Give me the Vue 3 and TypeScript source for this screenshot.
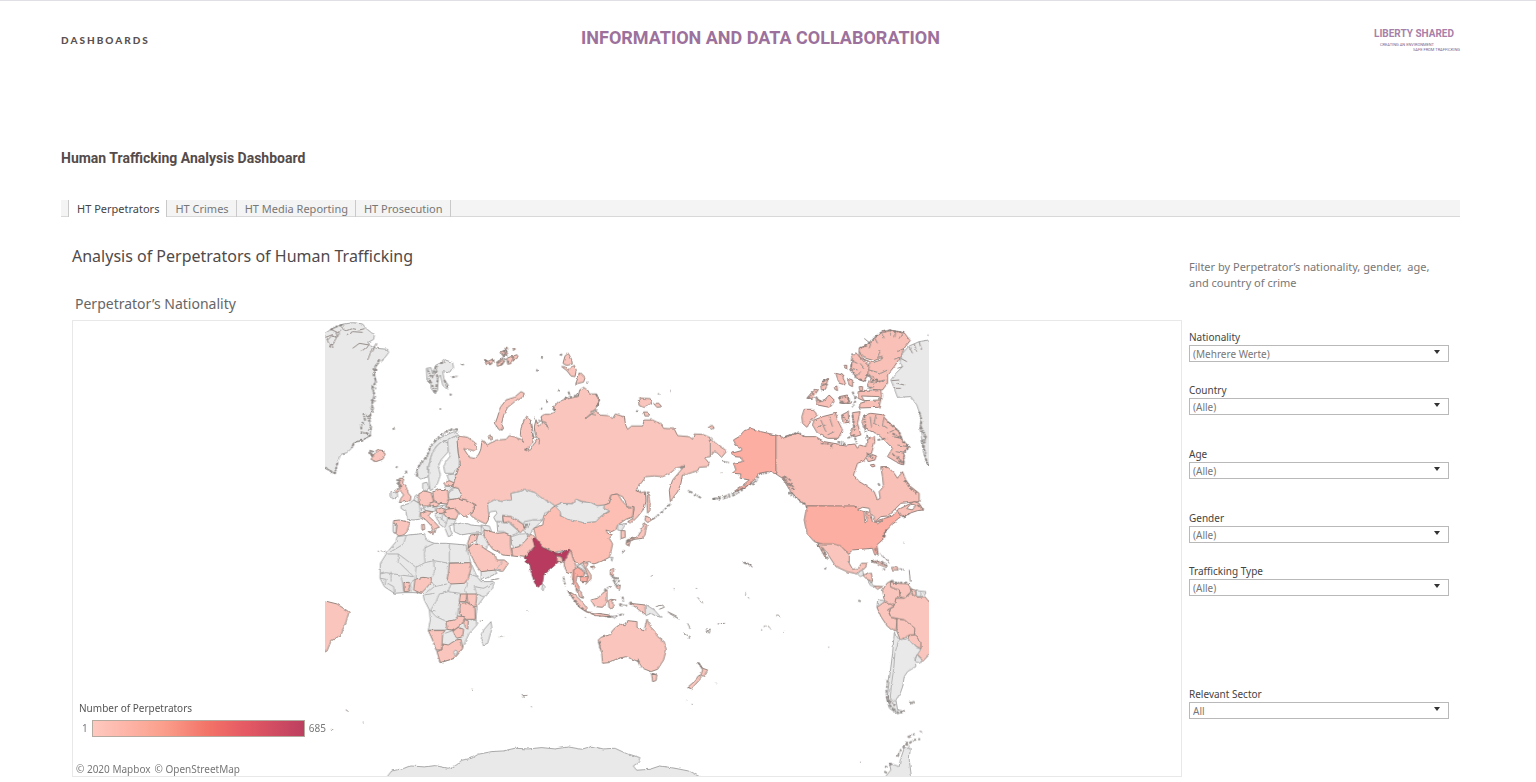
<script setup lang="ts">
import { ref } from 'vue'

type Tone = 'none' | 'low' | 'mid' | 'canada' | 'high' | 'top' | 'water' | 'border' | 'edge' | 'rough'
interface Region { name: string; x: number; y: number; shapes: [Tone, string][] }
interface Filter { id: string; label: string; options: string[]; value: string; space: string }

const tabs = ['HT Perpetrators', 'HT Crimes', 'HT Media Reporting', 'HT Prosecution']
const activeTab = ref(tabs[0])

const filters = ref<Filter[]>([
  { id: 'nationality', label: 'Nationality', options: ['(Mehrere Werte)', '(Alle)'], value: '(Mehrere Werte)', space: 'first' },
  { id: 'country', label: 'Country', options: ['(Alle)'], value: '(Alle)', space: 'near' },
  { id: 'age', label: 'Age', options: ['(Alle)'], value: '(Alle)', space: 'wide' },
  { id: 'gender', label: 'Gender', options: ['(Alle)'], value: '(Alle)', space: 'wide' },
  { id: 'type', label: 'Trafficking Type', options: ['(Alle)'], value: '(Alle)', space: 'near' },
  { id: 'sector', label: 'Relevant Sector', options: ['All'], value: 'All', space: 'apart' },
])

const regions: Region[] = [
  {
    name: 'north-atlantic', x: -12, y: -3, shapes: [
      ['none', 'M0 50L12 40 30 28 60 14 95 8 125 12 135 25 160 45 158 58 140 68 150 75 165 85 200 88 203 98 190 115 178 125 165 140 160 160 165 180 155 200 160 220 152 250 158 265 145 290 152 320 148 345 125 362 100 366 92 385 78 398 60 403 50 425 42 460 25 450 12 445 0 450Z'],
      ['edge', 'M20 60l15-15 12 10M35 75l10-20M14 52l20-8 14 8 8-14M30 28l20 10 10-8M45 35l5 15M60 20l15 12 20-6 20 4 16-4M75 45l20-10 30 2M95 85l20-15 30 5M120 95l25-20M140 120l12-30 10-8M155 95l10-25M15 50l14 34M22 80l10-8 4 12'],
      ['rough', 'M175 118L162 142 158 165 166 185 154 205 162 230 152 255 156 275 142 295 150 320 140 340 122 338 120 315 132 300 128 282 142 290M160 150l10 0M152 200l14 6M150 240l14 4M150 345L125 362 100 366 92 385M12 442L25 452 42 460 50 425M28 30L45 20 70 13'],
      ['none', 'M316 145L330 143 335 160 345 135 358 130 368 118 395 128 398 145 380 158 365 155 370 180 382 195 378 208 365 195 358 165 352 175 350 210 343 222 330 205 330 190 318 180Z'],
      ['rough', 'M320 148L332 175 345 140 350 180 342 220 332 190 320 175M358 130L375 125M370 180l10 22M420 132l10 2M393 172l18-4M356 267l4 0M386 223l6 2M215 328l6-3M225 440l4 3M255 452l2 12M250 468l-3 5'],
      ['low', 'M490 118l12 6 14-8 4 8-10 10-14 0zM528 125l15-8 8 8-8 10-14 4zM540 95l14-4 6 10-12 10zM558 115l14-6 8 10-10 12-10 2zM572 110l16-6 4 8-16 10zM552 84l6-3 2 8-6 0zM575 86l8 0-2 6z'],
      ['rough', 'M492 120L505 132 518 118M530 130L545 115 558 92 550 108 540 100M540 135L552 118 566 128M548 90L558 110'],
      ['low', 'M148 402L158 405 165 395 175 390 188 392 193 405 185 418 165 425 150 418 154 412Z'],
      ['rough', 'M142 400L155 395 148 405 158 408M145 392l8 2'],
      ['none', 'M288 448L300 430 318 410 330 380 350 358 375 345 400 335 415 345 405 350 385 360 365 363 345 380 330 410 322 440 322 470 300 478 290 470Z'],
      ['none', 'M365 363L380 368 382 395 360 420 352 440 358 465 350 490 340 505 328 512 322 470 325 430 335 395 350 375Z'],
      ['none', 'M380 360L405 347 412 360 410 380 415 420 415 440 400 460 372 460 368 440 375 425 388 408 382 395Z'],
      ['rough', 'M288 470L286 448 302 428 318 408 328 380 348 356 368 340 395 328 415 336M372 335L398 326 412 330'],
      ['none', 'M305 490L318 487 325 505 312 512 305 505ZM378 465L402 462 405 478 400 490 385 485ZM370 498L403 500 388 515 372 508ZM385 515L395 502 415 505 425 522 418 538 385 538 382 528Z'],
      ['low', 'M368 490L385 482 402 490 403 498 375 498Z'],
      ['low', 'M235 475L248 475 245 490 255 500 262 520 270 530 268 542 235 548 240 535 248 525 240 515 235 500Z'],
      ['none', 'M210 515L228 512 230 530 215 537 210 528Z'],
      ['low', 'M222 512L230 506 234 514 226 518Z'],
      ['rough', 'M226 480L238 482 230 495 240 500 232 508M228 488l8 10'],
    ],
  },
  {
    name: 'eurasia', x: 468, y: -3, shapes: [
      ['low', 'M-65 348L-40 352-18 368-10 385-18 393-40 388-52 386-40 404-35 412-20 415-8 405-2 392 0 385 3 362 12 365 18 375 30 368 50 360 75 358 85 347 100 350 118 358 128 367 118 345 120 325 130 300 138 288 148 300 152 325 158 350 155 370 143 385 132 388 148 390 160 372 170 355 163 345 160 320 165 300 172 318 185 310 180 290 190 283 205 283 222 275 218 262 232 245 250 238 275 233 292 228 296 210 308 202 322 212 325 222 345 222 355 238 350 260 335 275 315 295 345 272 355 285 380 287 395 295 403 282 430 290 434 315 440 328 452 318 485 318 490 300 515 300 540 312 548 325 580 327 590 347 625 350 635 358 640 342 665 343 688 353 705 370 718 380 738 393 722 412 708 398 700 395 688 410 670 412 685 430 680 440 655 442 650 452 620 462 605 462 600 490 590 515 575 535 568 545 565 510 575 480 590 462 612 437 585 445 565 462 545 470 520 468 495 470 480 490 465 510 480 518 493 515 495 540 490 565 470 590 450 610 440 605 455 595 460 565 440 560 425 530 405 522 388 530 380 555 345 558 320 550 290 540 270 552 235 552 222 558 205 545 190 540 170 525 162 518 130 508 115 515 90 520 92 540 60 545 40 540 20 550 25 575 22 600 15 612 0 605-20 595-32 585-22 570-15 555-45 540-68 535-58 525-68 505-85 500-78 480-72 460-62 430-68 400-72 360Z'],
      ['edge', 'M688 353V410'],
      ['edge', 'M150 300L156 330 154 350 166 352 176 360 174 376M160 290L170 310 182 300 196 308 202 328M172 300L190 308 200 322M315 295L330 282 345 285M328 275L350 268'],
      ['rough', 'M45 318L65 330M215 265L222 272M262 215L270 232M195 240l5 8M180 265l4 2M230 210l4 2M465 510L482 516M130 388l14 4M316 187l6 2M236 103l8 2M180 112l6 2M165 150l6 2M530 222l5 2M568 213l2 0M465 273l4 2M598 445l12-8'],
      ['rough', 'M250 237L280 228 294 226M345 222L355 240 348 262'],
      ['low', 'M42 312L50 290 58 262 75 240 100 232 120 215 130 220 126 232 100 246 80 262 68 285 62 310 68 326 55 330Z'],
      ['low', 'M252 108L262 100 272 118 274 132 258 136 246 130ZM242 140L255 140 262 150 280 136 286 150 282 170 270 168 258 152ZM296 158L312 174 308 186 284 192 290 176ZM472 240L480 234 508 236 512 252 490 262 474 256ZM518 250L534 250 542 260 528 262ZM488 276L502 276 506 288 492 288ZM682 322L694 316 700 324 688 328ZM22 352L32 348 35 356 26 360Z'],
      ['none', 'M20 550L40 540 60 545 92 540 90 520 115 515 130 508 162 518 170 525 190 540 205 545 222 558 212 572 190 580 185 600 155 600 130 615 110 600 90 590 65 585 65 605 45 605 38 592 48 580 45 573 30 575 22 580Z'],
      ['none', 'M48 605L65 608 85 610 115 635 90 650 70 635 50 635ZM90 650L115 642 140 640 145 655 130 670 105 685 92 675ZM130 605L155 600 185 600 160 625 145 645 125 630Z'],
      ['low', 'M65 588L90 590 125 612 132 625 118 638 85 605 68 608Z'],
      ['rough', 'M132 615L150 612M128 622L145 620'],
    ],
  },
  {
    name: 'europe-africa', x: 138, y: 297, shapes: [
      ['none', 'M90 258L115 250 128 240 145 250 148 275 145 298 128 300 108 298 105 275 90 265ZM128 240L135 228 145 225 145 250ZM66 310L78 314 75 340 66 335Z'],
      ['low', 'M68 302L85 300 118 308 112 322 108 335 98 345 82 348 75 340 78 315 68 310Z'],
      ['none', 'M155 262L180 260 195 265 190 275 165 273ZM195 260L228 254 222 264 200 268ZM145 275L155 262 165 273 150 280ZM190 280L218 282 230 296 255 298 250 312 235 318 245 345 232 350 222 325 205 312Z'],
      ['border', 'M200 290L215 300 228 310M215 284L212 300M230 296L222 322'],
      ['low', 'M143 222L160 213 180 218 185 235 188 245 175 250 178 258 155 258 148 255 143 245Z'],
      ['low', 'M185 215L205 208 230 210 232 235 228 252 205 250 188 240Z'],
      ['low', 'M175 250L190 245 206 252 195 260 178 258ZM195 270L215 262 225 268 215 280 198 280Z'],
      ['low', 'M232 240L262 235 285 240 315 255 308 270 298 280 285 285 290 292 278 290 265 280 255 268 230 265 228 255Z'],
      ['low', 'M225 268L250 265 262 280 255 298 230 295 218 282Z'],
      ['low', 'M148 280L165 272 182 275 172 288 190 305 205 322 195 325 192 338 183 320 165 300 150 292ZM172 335L188 336 186 344ZM152 315L160 313 161 328 153 331Z'],
      ['none', 'M248 315L275 308 300 315 330 318 333 338 300 340 270 345 250 335ZM320 342L338 345 352 372 345 390 315 370ZM330 315L355 318 362 335 340 330ZM330 455L370 448 378 460 345 475 330 480Z'],
      ['low', 'M298 345L322 342 315 360 300 370 292 385 290 370Z'],
      ['low', 'M338 330L360 335 380 340 400 338 418 345 418 380 425 408 395 405 380 395 365 388 352 370 340 350Z'],
      ['low', 'M292 385L305 372 325 375 350 392 372 405 378 420 400 420 412 430 395 455 375 450 330 455 318 440 305 415 295 395Z'],
      ['border', 'M395 455L375 450 392 432 392 420'],
      ['low', 'M425 408L422 385 445 380 465 360 480 342 492 355 492 378 470 400 462 412Z'],
      ['none', 'M78 350L115 345 160 340 168 362 190 370 225 370 285 375 290 395 300 430 318 470 330 485 370 485 365 505 340 530 318 560 315 600 318 615 295 640 285 660 272 690 250 715 208 728 200 700 185 660 172 630 178 600 175 570 160 540 155 520 128 518 100 518 70 520 40 500 27 475 28 430 50 395 75 365Z'],
      ['border', 'M105 348L98 372 60 395M50 402L82 402 82 425 128 470 88 465 45 458 28 462M82 402L135 442 162 428 160 400 164 375M135 442L132 478M162 428L188 422 190 455 182 475M188 422L235 430 235 373M235 428L292 428M190 370L160 385M182 485L190 500 228 492M190 500L165 520M190 520L160 525M240 492L232 515 205 522 195 545 178 572 195 590 222 602M232 515L268 520M265 550L258 590M178 572H192M172 630L222 630 228 628M282 478L290 492 283 512 288 522M318 470L290 460M340 530L318 522 310 500 338 505 365 490M120 515L118 488 132 478M98 515L95 490 88 465M70 520L68 500 50 490M222 640L245 632M300 600L318 602M28 475L45 478 42 495M60 455L60 485'],
      ['low', 'M235 430L298 428 300 445 292 475 280 490 240 492 228 478 232 460ZM132 478L155 472 180 475 182 485 165 505 150 520 128 510ZM98 488L115 487 116 513 100 516Z'],
      ['low', 'M288 522L318 522 315 550 312 562 290 548ZM268 522L288 522 285 545 265 545ZM265 550L290 548 312 565 313 598 285 598 268 585ZM280 598L292 603 290 628 282 620ZM225 605L250 600 258 588 278 590 278 610 262 620 250 632 228 628ZM245 632L262 622 278 628 275 650 258 655ZM172 632L222 632 215 640 212 690 195 690 185 660ZM212 690L215 672 232 675 255 660 270 658 275 685 250 715 208 728 198 695Z'],
      ['none', 'M247 697L253 690 260 695 256 703 250 703ZM360 605L363 625 350 670 338 675 330 660 338 630Z'],
      ['low', 'M515 378L535 385 558 392 558 402 530 395Z'],
      ['top', 'M485 355L505 352 508 370 518 385 555 402 560 415 558 430 535 450 518 465 515 485 502 502 492 490 480 455 478 435 462 425 470 418 460 415 475 400 492 380Z'],
      ['none', 'M515 492L522 500 520 512 512 508Z'],
      ['edge', 'M20 393l4 2M30 392l4 3M38 396l5-3M327 603l8 2M390 648l4 2M400 650l2-2M360 480l24-4'],
    ],
  },
  {
    name: 'east-asia-oceania', x: 528, y: 447, shapes: [
      ['mid', 'M162 108L180 125 178 138 250 158 285 155 300 138 325 125 308 115 310 105 325 100 330 75 350 72 365 95 385 115 398 112 395 140 375 148 350 165 345 178 332 185 315 180 320 190 335 195 325 205 335 222 330 245 325 262 300 275 278 282 265 275 245 278 232 285 218 270 208 240 190 243 160 247 128 232 105 205 98 175 125 165 130 140 152 115Z'],
      ['none', 'M162 108L180 100 215 102 225 87 240 95 270 98 290 108 310 105 308 115 325 122 300 138 285 155 250 158 200 148 180 138 178 125Z'],
      ['none', 'M350 165L375 160 362 182 350 180ZM328 262L336 262 333 274ZM168 244L185 244 184 250 172 250Z'],
      ['low', 'M360 182L372 182 373 202 360 206ZM435 138L455 148 440 158 432 150ZM430 160L438 165 432 195 425 205 400 208 385 215 378 205 395 205 410 200 420 185ZM378 212L388 215 383 230 375 222ZM440 65L445 85 448 120 440 130 438 100ZM268 290L280 288 276 298Z'],
      ['rough', 'M455 148L485 125 510 100M378 210L384 228M380 212L400 206M370 240L365 250M600 84L560 60M635 87L670 85 700 75 725 60'],
      ['top', 'M158 247L170 252 190 245 205 238 211 245 195 268 188 275 182 262 168 260Z'],
      ['low', 'M168 258L182 262 185 278 170 278Z'],
      ['low', 'M190 275L208 240 218 270 225 290 218 300 218 320 215 345 210 310 200 310 190 290Z'],
      ['high', 'M218 300L230 292 250 305 248 318 235 320 228 318 225 335 235 352 228 358 218 340Z'],
      ['none', 'M228 288L240 282 262 310 262 320 248 300Z'],
      ['low', 'M245 278L262 280 255 292 270 315 270 330 255 345 262 320 250 290Z'],
      ['high', 'M238 320L262 320 258 335 242 335Z'],
      ['low', 'M225 355L240 365 245 385 235 380ZM200 362L222 375 240 392 258 415 255 425 235 412 215 385ZM255 425L290 430 325 435 325 440 285 437ZM270 390L290 385 305 370 318 360 318 395 305 412 282 410ZM328 298L338 295 337 318 328 315ZM345 350L358 345 355 362ZM322 392L330 388 345 390 330 396 340 405 332 418 324 412Z'],
      ['rough', 'M188 320L190 335 194 350M204 366L235 408 255 424M330 320L350 325 340 335 352 345M338 322L354 332 346 348M335 325L345 345M310 362L330 345M365 380L368 398M355 402L380 408M325 440L350 438 370 430M385 400L410 410M388 395L395 408M318 440L340 442'],
      ['low', 'M385 400L405 402 432 405 433 435 420 425 405 412Z'],
      ['none', 'M433 403L460 420 480 442 462 437 450 430 433 438Z'],
      ['edge', 'M465 410L485 405 490 412 475 418M500 425L530 440M505 430L535 448M560 460L568 475M548 490L568 500 558 506M590 382L605 400M450 320L455 315M615 485L628 480 625 490 615 478M650 462L672 460M725 278L740 280 755 292M660 8l4 0M518 355l3 2M740 380l3 2M585 355l4 2M645 638l2 2M572 702l3 2M557 690l2 0M66 678l10-2M90 710l3 1M-5 500l4 0M78 422l3 2M252 442l3 1'],
      ['low', 'M292 510L300 502 325 495 338 478 358 462 372 468 380 452 408 455 408 472 430 480 438 448 448 470 460 482 470 500 490 515 496 540 488 570 470 598 450 605 425 595 412 575 400 570 375 560 345 568 325 578 305 580 302 550ZM452 612L468 615 465 632 455 635ZM592 578L605 595 620 600 608 620 600 615 605 600ZM598 615L600 625 582 645 572 660 560 652 580 635 592 618Z'],
      ['rough', 'M294 515L298 535M410 570L416 580M592 578L604 594M562 652L570 660M452 612l16 0'],
    ],
  },
  {
    name: 'north-america', x: 1128, y: -3, shapes: [
      ['canada', 'M225 345L245 352 290 340 310 350 345 350 370 365 410 372 440 375 462 372 470 385 480 375 495 380 500 355 520 348 522 365 512 400 500 405 490 422 470 430 458 465 475 485 500 500 520 515 530 540 538 535 535 515 548 500 545 470 540 440 560 440 580 460 590 475 605 455 615 480 630 500 655 520 655 545 620 548 600 550 580 570 560 588 540 590 520 608 500 590 490 575 465 560 318 558 295 540 270 515 245 475 225 462Z'],
      ['high', 'M225 345L180 335 150 325 130 332 115 350 98 360 105 375 122 385 122 392 92 400 100 410 122 412 125 425 98 430 105 450 95 460 120 462 118 475 145 480 120 500 95 518 130 505 160 480 175 460 200 455 225 462Z'],
      ['high', 'M318 558L460 558 490 572 498 580 508 590 520 610 535 600 575 588 590 570 600 590 575 610 555 630 550 655 528 675 532 705 522 705 515 685 480 688 455 690 445 700 430 690 415 680 395 682 370 675 340 665 318 640 310 600Z'],
      ['canada', 'M590 570L610 560 640 545 655 550 668 570 650 572 632 578 605 590Z'],
      ['water', 'M470 570L485 562 505 565 508 578 495 574 498 605 492 605 490 575ZM510 580L520 590 522 608 545 602 530 612 515 606ZM618 566L630 552 645 556 635 570Z'],
      ['rough', 'M35 537L60 533 95 520 125 505 155 485M160 490L178 462 205 458M245 470L258 490 275 500 272 520 292 540 305 548 318 565M250 468L270 485 280 510M265 515L272 530M252 475L265 505M155 492L170 480M65 425L85 428M555 628L550 655M605 590L625 582M650 555L668 568M612 480L628 505 652 522'],
      ['canada', 'M475 85L500 75 520 55 540 38 565 30 610 38 628 62 610 85 600 110 580 140 560 165 560 190 545 210 510 208 500 195 510 170 498 160 505 130 475 110Z'],
      ['canada', 'M455 110L465 98 480 115 505 140 500 165 490 185 465 175 450 145ZM472 215L540 212 542 228 535 262 475 264 478 250 495 245 472 235ZM310 268L335 268 350 285 330 305 318 322 305 310 303 290ZM340 300L365 290 405 280 410 300 425 330 412 355 380 355 350 340 335 315ZM422 285L442 275 445 310 428 312ZM455 278L478 275 470 310 480 345 462 350 448 345 458 320ZM345 235L365 245 385 225 400 240 385 262 350 255ZM318 235L340 208 352 210 335 235ZM415 230L440 225 450 250 420 250ZM405 160L425 165 435 195 415 190ZM440 175L455 180 455 200 445 195ZM365 185L382 175 378 190 365 194ZM360 198L380 192 374 208 362 210ZM400 200l8-2 2 14-8-4zM430 136l8 0 0 10-6-2zM475 200l10 0 0 12-8 0z'],
      ['canada', 'M490 285L510 280 550 285 560 305 595 335 605 365 625 380 610 400 608 435 585 425 560 410 575 385 545 355 525 340 490 325 483 305ZM497 415L512 403 527 408 522 420 502 425ZM508 435l12-2 2 6-8 2z'],
      ['water', 'M475 95L490 118 515 128 540 120 545 112 520 122 495 115ZM482 228L535 230 538 240 490 242Z'],
      ['edge', 'M490 55L510 72 505 85M520 50L530 70M545 35L550 55M565 30L568 45M585 34L582 52M605 38L595 56M610 85L590 95M600 110L580 118M540 90L530 112 545 108M478 130L490 145M455 125L470 130M452 145L470 150M465 170L480 155M490 180L505 160 520 175 510 185 530 180M505 150L540 160 560 150M520 190L550 180M500 205L520 200M508 290L512 320M525 285L520 310 535 320M550 290L545 315 560 325M580 330L560 340M600 355L575 350M620 380L590 375M610 400L585 395M608 430L590 408M350 320L375 315M360 300L375 335M385 290L395 320M400 335L380 345'],
      ['rough', 'M475 85L495 78 515 58 540 38 568 31 608 38M455 100L450 145 465 175 490 182M500 165L515 180 540 185M412 235L440 230 445 248 418 248 432 240M455 215L465 240 455 262M345 230L355 245 370 240M320 235L345 215M365 185L380 178M425 285L440 305M455 285L462 330M560 305L595 335 605 365 625 380 610 400 608 435M575 340L600 355M250 352L290 338 310 348M360 370L390 372 392 385M410 365L435 372M440 355L460 345 468 372M490 285L495 340 500 370M498 400L522 420M575 400L605 430M532 490L538 500M530 360L560 355'],
      ['none', 'M700 60L684 60 655 65 625 78 605 100 598 125 605 140 585 160 570 180 580 205 590 232 630 230 648 255 660 290 658 330 665 370 668 400 684 440 700 450Z'],
      ['edge', 'M655 65L662 90M640 72L648 95M625 80L635 100M600 115L618 125M605 140L590 145M572 182L595 180M578 205L600 205M590 190L610 195M680 45l3 2'],
      ['rough', 'M655 275L662 300 658 330 672 345 665 375 674 400 672 410 684 440M660 320L675 350 668 385'],
    ],
  },
  {
    name: 'latin-america', x: 1248, y: 627, shapes: [
      ['low', 'M230 40L248 42 275 42 300 48 325 75 325 100 335 118 352 115 362 100 378 100 372 115 355 125 350 132 318 125 285 110 262 75 242 48 262 90 250 78Z'],
      ['none', 'M350 132L358 124 365 120 368 135 358 140ZM378 148L395 160 400 170 388 166Z'],
      ['low', 'M365 135L392 130 395 155 378 148ZM398 168L425 170 410 178ZM390 95L410 93 440 108 430 110 400 98ZM452 112L467 112 472 120 454 120Z'],
      ['low', 'M425 180L438 160 452 152 448 170 475 180 478 200 465 205 460 228 430 212Z'],
      ['low', 'M448 155L470 160 505 162 510 185 490 205 478 200 475 180 450 172ZM510 175L525 185 525 205 515 195Z'],
      ['none', 'M525 182L555 185 550 200 528 200ZM410 210L432 212 420 235 408 232Z'],
      ['low', 'M408 232L432 215 460 228 440 240 450 262 468 268 465 305 440 290 420 260Z'],
      ['low', 'M465 205L490 205 510 190 528 202 552 200 564 215 580 220 580 365 564 375 548 392 528 372 540 355 538 335 522 315 520 295 490 270 468 265 450 262 442 240 460 230Z'],
      ['low', 'M468 268L490 270 522 295 520 315 500 318 478 330 468 305ZM505 315L522 315 540 338 540 355 525 350 500 328Z'],
      ['none', 'M460 308L475 330 500 325 525 352 540 358 522 385 525 410 500 425 490 440 485 470 478 490 465 510 470 540 490 545 470 552 445 535 438 510 445 450 455 370ZM528 374L545 392 540 400 522 395Z'],
      ['border', 'M472 335L462 370 458 420 452 460 448 505 465 515M540 183V200'],
      ['rough', 'M440 450L436 490 442 520 458 540 475 550 492 543M445 510L465 530M445 525L468 545M436 500L450 525M505 515L522 516M508 520L522 518M450 155L458 152M460 158L500 158M390 95L412 94 438 106M425 118l8 0M475 118l14 1M232 42L262 88M10 98L22 102 34 112M352 212l8 2M250 115l6 1M432 0L430 20M402 55L412 78'],
      ['edge', 'M418 70L428 80 440 90M430 80L445 100M505 120L508 155M60 300l4 0M68 290l6-2M82 288l4 6M88 296l4 0M105 256l12 4M126 306l3 0M12 192l4 0M22 203l3 2M262 352l3 0M357 697l3 1M536 604l8 2M487 38l4 1'],
      ['none', 'M430 745L450 720 445 700 460 705 475 710 478 690 490 655 508 655 505 690 512 745Z'],
      ['rough', 'M470 680L480 660 495 645 500 635M505 640L520 630 538 628M500 622L522 612M430 725L440 730M432 710l8 2M445 705l10-4M495 640L505 650'],
    ],
  },
  {
    name: 'southern-edge', x: 0, y: 0, shapes: [
      ['low', 'M-20 835L0 840 36 849 72 873 63 903 48 942 18 960 6 990 0 993-20 1000Z'],
      ['none', 'M180 1375L200 1350 235 1343 255 1335 300 1338 330 1334 370 1342 395 1332 410 1318 440 1312 460 1300 500 1292 535 1290 570 1282 610 1284 650 1280 690 1284 730 1278 770 1285 800 1276 835 1284 870 1282 900 1296 945 1310 940 1325 925 1335 935 1348 975 1345 1005 1335 1050 1342 1090 1350 1140 1375Z'],
      ['edge', 'M62 1166l8 6M18 1225l6 1M115 1202l2 6M590 1120l8 6M595 1128l4 2M440 1105l4 0'],
    ],
  },
]
</script>

<template>
  <div class="page">
    <header class="site-header">
      <nav><a class="nav-link" href="#dashboards">Dashboards</a></nav>
      <h1>Information and Data Collaboration</h1>
      <a class="logo" href="#home">
        <span class="logo-name">LIBERTY SHARED</span>
        <span class="logo-line first-line">CREATING AN ENVIRONMENT</span>
        <span class="logo-line">SAFE FROM TRAFFICKING</span>
      </a>
    </header>

    <main>
      <h2>Human Trafficking Analysis Dashboard</h2>

      <div class="tabs" role="tablist">
        <button
          v-for="tab in tabs"
          :key="tab"
          type="button"
          role="tab"
          class="tab"
          :class="{ active: tab === activeTab }"
          :aria-selected="tab === activeTab"
          @click="activeTab = tab"
        >{{ tab }}</button>
      </div>

      <div class="dashboard">
        <section class="analysis">
          <h3>Analysis of Perpetrators of Human Trafficking</h3>
          <h4>Perpetrator’s Nationality</h4>
          <div class="map-frame">
            <svg class="map" viewBox="0 0 1812 1365" role="img" aria-label="Perpetrators by nationality">
              <defs>
                <filter id="coast" x="0" y="0" width="1812" height="1365" filterUnits="userSpaceOnUse">
                  <feTurbulence type="fractalNoise" baseFrequency="0.06" numOctaves="3" seed="4" result="n" />
                  <feDisplacementMap in="SourceGraphic" in2="n" scale="8" xChannelSelector="R" yChannelSelector="G" />
                </filter>
              </defs>
              <g filter="url(#coast)">
                <g v-for="region in regions" :key="region.name" :transform="`translate(${region.x} ${region.y})`">
                  <path v-for="(shape, i) in region.shapes" :key="i" :class="shape[0]" :d="shape[1]" />
                </g>
              </g>
            </svg>
            <div class="legend">
              <p class="legend-title">Number of Perpetrators</p>
              <div class="scale">
                <span class="scale-min">1</span>
                <span class="ramp"></span>
                <span>685</span>
              </div>
              <p class="credits"><a href="#mapbox">© 2020 Mapbox</a><a href="#osm">© OpenStreetMap</a></p>
            </div>
          </div>
        </section>

        <aside class="filters">
          <p class="hint">Filter by Perpetrator’s nationality, gender, &nbsp;age, and country of crime</p>
          <div v-for="item in filters" :key="item.id" class="field" :class="item.space">
            <label :for="item.id">{{ item.label }}</label>
            <div class="select-box">
              <select :id="item.id" v-model="item.value">
                <option v-for="option in item.options" :key="option">{{ option }}</option>
              </select>
              <svg class="arrow" viewBox="0 0 6 4" aria-hidden="true"><path d="M0 0h6L3 4z" /></svg>
            </div>
          </div>
        </aside>
      </div>
    </main>
  </div>
</template>

<style>
body {
  margin: 0;
  background: #fff;
}
</style>

<style scoped>
.page {
  box-sizing: border-box;
  padding: 0 76px 0 61px;
  border-top: 1px solid #e0dfe6;
  color: #555;
  font-family: "Noto Sans", "Open Sans", sans-serif;
  overflow: hidden;
}
h1, h2, h3, h4, p { margin: 0; }
a { color: inherit; text-decoration: none; }
.site-header {
  display: grid;
  grid-template-columns: 1fr auto 1fr;
  align-items: center;
  padding-top: 18px;
  height: 38px;
}
.nav-link {
  display: block;
  padding-top: 4px;
  color: #5a5150;
  font: 900 10px/16px Lato, sans-serif;
  letter-spacing: 2px;
  text-transform: uppercase;
}
h1 {
  color: #9c719c;
  font: 700 18px/32px Roboto, sans-serif;
  text-transform: uppercase;
}
.logo {
  display: flex;
  flex-direction: column;
  justify-self: end;
  width: 86px;
  padding-top: 2px;
  color: #a87fa9;
}
.logo-name { font: 700 10px/16px Roboto, sans-serif; white-space: nowrap; }
.logo-line {
  align-self: flex-end;
  color: #77668f;
  font: 400 4px/5px Roboto, sans-serif;
  white-space: nowrap;
}
.first-line { padding-right: 26px; }
h2 {
  padding-top: 88px;
  color: #544b4a;
  font: 700 14px/26px Roboto, sans-serif;
}
.tabs {
  display: flex;
  margin-top: 29px;
  height: 17px;
  padding-left: 7px;
  background: #f4f4f4;
  box-shadow: inset 0 -1px #d8d8d8;
}
.tab {
  padding: 0 7px 0 8px;
  border: 0;
  border-right: 1px solid #c9c9c9;
  background: none;
  color: #777;
  font: 400 11px/16px "Noto Sans", sans-serif;
  cursor: pointer;
}
.tab.active {
  border-left: 1px solid #c9c9c9;
  background: #fff;
  color: #444;
}
.dashboard {
  display: flex;
  gap: 7px;
  padding: 0 11px;
}
.analysis { flex: 1; min-width: 0; }
h3 {
  padding-top: 27px;
  color: #4f4a4a;
  font: 400 16px/24px "Noto Sans", sans-serif;
}
h4 {
  padding: 26px 0 6px 3px;
  color: #666;
  font: 400 14px/20px "Noto Sans", sans-serif;
}
.map-frame {
  position: relative;
  border: 1px solid #e8e8e8;
}
.map {
  display: block;
  width: 54.5%;
  margin: 0 auto;
}
.map path { vector-effect: non-scaling-stroke; stroke-linejoin: round; stroke-width: 1px; }
.none { fill: #e9e9e9; stroke: #a9a9a9; }
.low { fill: #fac5bc; stroke: #98877f; }
.mid { fill: #fdbfb3; stroke: #98877f; }
.canada { fill: #f8c0b6; stroke: #98807a; }
.high { fill: #fcaea2; stroke: #98807a; }
.top { fill: #b83a5e; stroke: #8c4757; }
.water { fill: #fff; stroke: #98877f; }
.border { fill: none; stroke: #b3b3b3; }
.edge { fill: none; stroke: #978f8c; }
.map .rough { fill: none; stroke: #7d7774; stroke-width: 2px; stroke-dasharray: 3 1 1 1 2 2; stroke-opacity: 0.75; }
.legend {
  position: absolute;
  left: 3px;
  bottom: 0;
  color: #555;
  font-size: 10px;
  line-height: 14px;
}
.legend-title { padding-left: 3px; line-height: 16px; }
.scale { display: flex; align-items: center; gap: 4px; margin-top: 4px; line-height: 16px; color: #777; }
.scale-min { padding-left: 6px; }
.ramp {
  box-sizing: border-box;
  width: 213px;
  height: 17px;
  border: 1px solid #b5aa9f;
  background: linear-gradient(90deg, #ffc9c0, #fb9f8c 33%, #f27267 55%, #e55a64 72%, #bc3f60);
}
.credits { display: flex; gap: 4px; margin-top: 25px; color: #777; }
.filters { width: 260px; }
.hint {
  padding-top: 42px;
  color: #777;
  font-size: 11px;
  line-height: 16px;
}
.field label {
  display: block;
  color: #444;
  font-size: 10px;
  line-height: 16px;
}
.first { margin-top: 38px; }
.near { margin-top: 20px; }
.wide { margin-top: 31px; }
.apart { margin-top: 90px; }
.select-box { position: relative; }
.select-box select {
  display: block;
  box-sizing: border-box;
  width: 100%;
  height: 17px;
  padding: 0 20px 0 3px;
  border: 1px solid #b9b9b9;
  border-radius: 0;
  appearance: none;
  background: #fff;
  color: #777;
  font: 400 10px/14px "Noto Sans", sans-serif;
}
.arrow {
  position: absolute;
  top: 5px;
  right: 9px;
  width: 6px;
  height: 4px;
  fill: #333;
  pointer-events: none;
}
</style>
